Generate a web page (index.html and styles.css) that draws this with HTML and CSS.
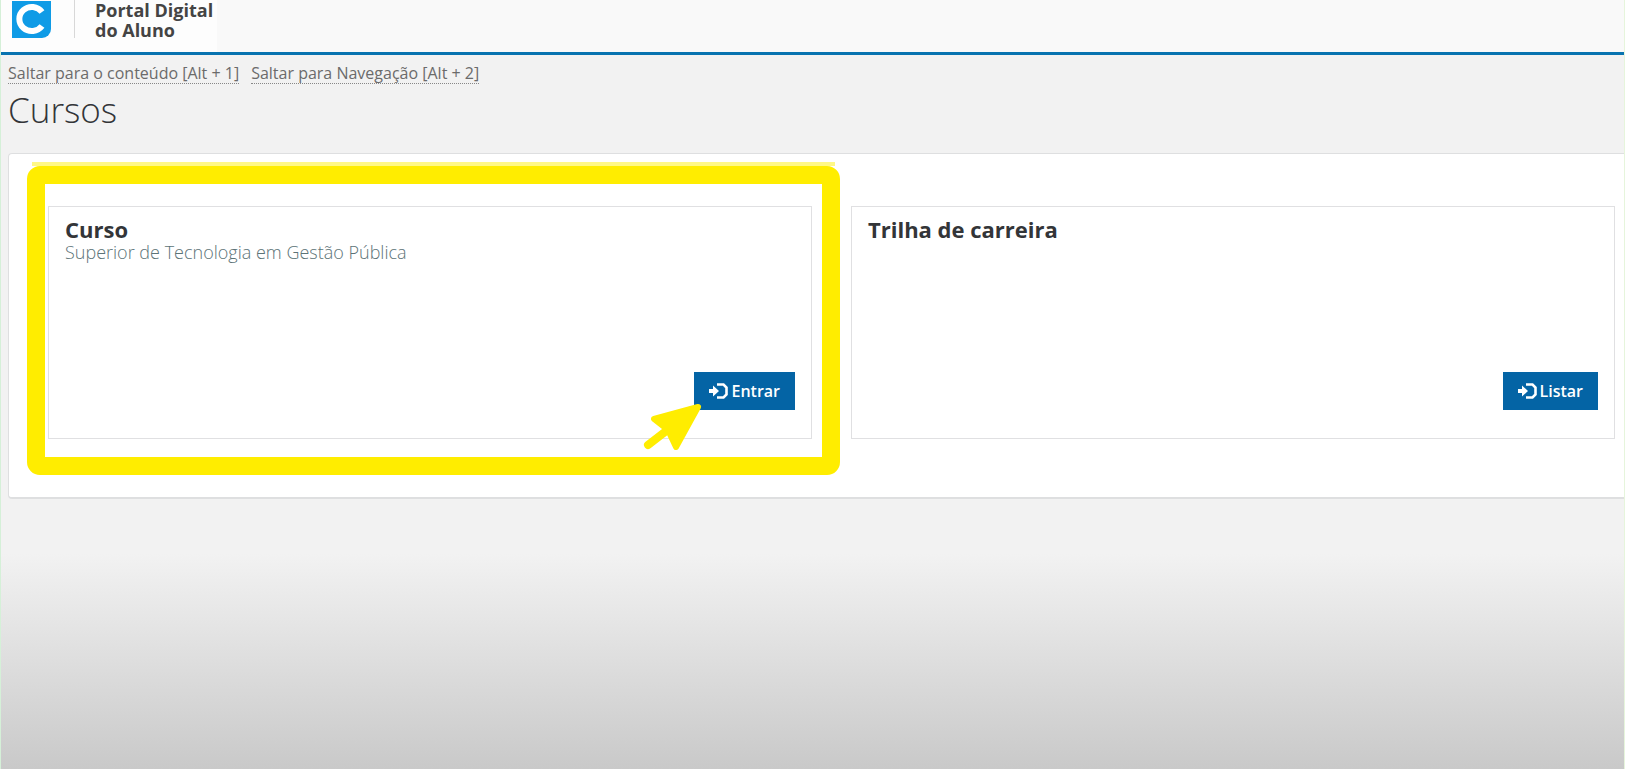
FILE: index.html
```html
<!doctype html>
<html lang="pt-BR">
<head>
	<meta charset="UTF-8">
	<title>Portal Digital do Aluno</title>
	<link rel="stylesheet" href="styles.css">
</head>
<body>
	<header class="header">
		<div class="brand">
			<svg class="logo" viewBox="0 0 39 37" aria-hidden="true">
				<path d="M0 0h39v28a9 9 0 0 1-9 9H0z" fill="#0f9be6"/>
				<path d="M30 11A12.500 12 0 1 0 30 25" fill="none" stroke="#fff" stroke-width="6"/>
			</svg>
			<p class="brand-name">Portal Digital<br>do Aluno</p>
		</div>
	</header>
	<nav class="skip">
		<a href="#conteudo">Saltar para o conteúdo [Alt + 1]</a>
		<a href="#navegacao">Saltar para Navegação [Alt + 2]</a>
	</nav>
	<h1>Cursos</h1>
	<main class="panel" id="conteudo">
		<section class="card">
			<h2>Curso</h2>
			<p>Superior de Tecnologia em Gestão Pública</p>
			<div class="highlight"></div>
			<div class="action">
				<button type="button" class="btn">
					<svg class="icon" viewBox="0 0 19 16" aria-hidden="true">
						<path d="M0 6h4V2.500L10 8l-6 5.500V10H0z" fill="#fff"/>
						<path d="M8 1.500h6.500l3 3v7l-3 3H8" fill="none" stroke="#fff" stroke-width="2.600"/>
					</svg>Entrar
				</button>
				<svg class="pointer" viewBox="0 0 60 50" aria-hidden="true">
					<path d="M56 6L12 18l14 11 8 17z" fill="#ffed00" stroke="#ffed00" stroke-width="6" stroke-linejoin="round"/>
					<path d="M6 44l22-17" stroke="#ffed00" stroke-width="8" stroke-linecap="round"/>
				</svg>
			</div>
		</section>
		<section class="card">
			<h2>Trilha de carreira</h2>
			<div class="action">
				<button type="button" class="btn">
					<svg class="icon" viewBox="0 0 19 16" aria-hidden="true">
						<path d="M0 6h4V2.500L10 8l-6 5.500V10H0z" fill="#fff"/>
						<path d="M8 1.500h6.500l3 3v7l-3 3H8" fill="none" stroke="#fff" stroke-width="2.600"/>
					</svg>Listar
				</button>
			</div>
		</section>
	</main>
</body>
</html>
```

FILE: styles.css
```css
*{margin:0;padding:0;box-sizing:border-box;}
body{
	min-height:100vh;
	font-family:"Open Sans",sans-serif;
	color:#333538;
	background:linear-gradient(#f2f2f2 72%,#e8e8e8 79%,#c9c9c9);
	border-left:1px solid #d5f0d8;
	border-right:1px solid #e6f5dc;
}
.header{
	height:55px;
	background:#f9f9f9;
	border-bottom:3px solid #0873b0;
	overflow:hidden;
}
.brand{
	display:flex;
	align-items:flex-start;
	width:216px;
	height:52px;
	padding-left:11px;
	background:#fdfdfd;
}
.logo{
	width:39px;
	height:37px;
	margin-top:1px;
}
.brand-name{
	height:38px;
	margin-left:23px;
	padding-left:20px;
	border-left:1px solid #d8d8d8;
	font-size:18px;
	font-weight:700;
	line-height:20px;
	color:#444;
	white-space:nowrap;
}
.skip{
	display:flex;
	gap:12px;
	padding:8px 7px 0;
	font-size:16px;
	line-height:20px;
}
.skip a{
	color:#6b6b6b;
	text-decoration:none;
	border-bottom:1px dotted #888;
}
h1{
	padding:2px 7px 0;
	font-size:35px;
	font-weight:300;
	line-height:48px;
}
.panel{
	display:grid;
	grid-template-columns:1fr 1fr;
	gap:39px;
	margin:19px 0 0 7px;
	padding:52px 9px 58px 39px;
	background:#fff;
	border:1px solid #dedfe0;
	border-right:0;
	border-bottom-width:2px;
	border-radius:4px 0 0 4px;
}
.card{
	position:relative;
	display:flex;
	flex-direction:column;
	min-height:233px;
	padding:10px 16px 28px;
	border:1px solid #e0e0e2;
}
.card h2{
	font-size:22px;
	font-weight:700;
	line-height:25px;
}
.card p{
	font-size:18px;
	font-weight:300;
	line-height:20px;
	color:#5c7377;
}
.action{
	position:relative;
	margin-top:auto;
	align-self:flex-end;
}
.btn{
	display:flex;
	align-items:center;
	gap:3px;
	height:38px;
	padding:0 15px;
	border:0;
	background:#0464a5;
	color:#fff;
	font:600 16px "Open Sans",sans-serif;
	cursor:pointer;
}
.icon{
	width:19px;
	height:16px;
}
/* marca em volta do curso */
.highlight{
	position:absolute;
	inset:-41px -29px -37px -22px;
	border:18px solid #ffed00;
	border-radius:13px;
	pointer-events:none;
}
.highlight::before{
	content:"";
	position:absolute;
	inset:-22px -13px auto -13px;
	height:4px;
	background:#fff886;
}
.pointer{
	position:absolute;
	top:29px;
	left:-52px;
	width:60px;
	height:50px;
	pointer-events:none;
}
```
